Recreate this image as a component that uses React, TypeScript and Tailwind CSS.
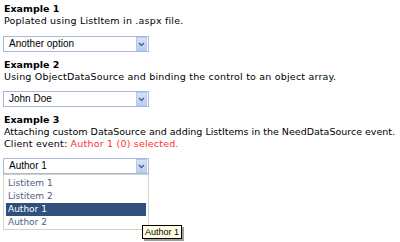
import React from 'react';

const bodyFont = "font-['DejaVu_Sans',Verdana,sans-serif]";
const selectFont = "font-['Liberation_Sans',Arial,sans-serif]";

const Arrow: React.FC = () => (
  <div className="w-[11px] h-[14px] mr-px flex items-center justify-center bg-gradient-to-b from-[#d6e2fb] to-[#b9cdf4] border border-[#b6c8ee]">
    <svg width="7" height="5" viewBox="0 0 7 5">
      <path d="M1 1 L3.5 3.5 L6 1" fill="none" stroke="#4d6185" strokeWidth="1.4" />
    </svg>
  </div>
);

const Select: React.FC<{ value: string }> = ({ value }) => (
  <div className="w-[146px] h-[16px] -ml-px border border-[#a5b9d8] bg-white flex items-center">
    <span className={`flex-1 pl-[5px] text-[10px] leading-[14px] tracking-normal text-black ${selectFont}`}>{value}</span>
    <Arrow />
  </div>
);

const Heading: React.FC<{ children: React.ReactNode }> = ({ children }) => (
  <div className={`font-bold text-[9.5px] leading-[12px] tracking-normal ${bodyFont}`}>{children}</div>
);

const items = ['Listitem 1', 'Listitem 2', 'Author 1', 'Author 2'];

const App: React.FC = () => {
  return (
    <div className={`relative w-[400px] h-[242px] overflow-hidden bg-white pl-[4px] pt-[3px] text-black text-[9.5px] leading-[12px] tracking-[0.2px] ${bodyFont}`}>
      {/* Example 1 */}
      <Heading>Example 1</Heading>
      <div>Poplated using ListItem in .aspx file.</div>
      <div className="mt-[9px]">
        <Select value="Another option" />
      </div>

      {/* Example 2 */}
      <div className="mt-[7px]">
        <Heading>Example 2</Heading>
        <div>Using ObjectDataSource and binding the control to an object array.</div>
        <div className="mt-[8px]">
          <Select value="John Doe" />
        </div>
      </div>

      {/* Example 3 */}
      <div className="mt-[7px]">
        <Heading>Example 3</Heading>
        <div className="whitespace-nowrap tracking-normal">Attaching custom DataSource and adding ListItems in the NeedDataSource event.</div>
        <div>
          Client event: <span className="text-[#ff2f2f]">Author 1 (0) selected.</span>
        </div>
        <div className="relative mt-[8px]">
          <Select value="Author 1" />
          {/* open list */}
          <div className="absolute left-[-1px] top-[16px] w-[146px] h-[56px] bg-white border border-[#d4d4c4] px-[2px] pt-[2px] tracking-normal">
            {items.map((it) => (
              <div
                key={it}
                className={`h-[13px] pl-[2px] text-[9px] leading-[13px] ${
                  it === 'Author 1' ? 'bg-[#2f4f7c] text-white' : 'text-[#4f5f80]'
                }`}
              >
                {it}
              </div>
            ))}
          </div>
        </div>
      </div>

      {/* tooltip */}
      <div className={`absolute left-[142px] top-[225px] h-[14px] px-[2px] border border-black bg-[#ffffe1] text-[9px] leading-[12px] tracking-normal shadow-[2px_2px_0_#a0a0a0] ${selectFont}`}>
        Author 1
      </div>
    </div>
  );
};

export default App;
